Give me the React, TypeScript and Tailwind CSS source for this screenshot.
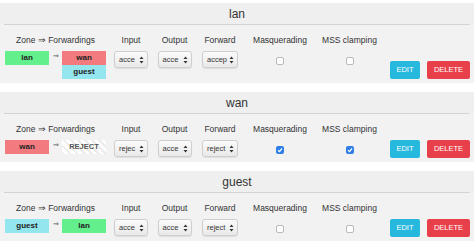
import React from "react";

const zoneColors: Record<string, string> = {
  lan: "bg-[#62ef8c]",
  wan: "bg-[#f37b80]",
  guest: "bg-[#93e6ed]",
};

interface PanelProps {
  title: string;
  forwards: string[] | null;
  input: string;
  output: string;
  forward: string;
  masq: boolean;
  mss: boolean;
  first?: boolean;
}

const Badge = ({ name }: { name: string }) => (
  <div
    className={`h-[14px] w-[44px] flex items-center justify-center text-[8px] font-bold text-[#222] ${zoneColors[name]}`}
  >
    {name}
  </div>
);

const Select = ({ value, width }: { value: string; width: string }) => (
  <div
    className={`${width} h-[17px] flex items-center rounded-[3px] border border-[#cfcfcf] bg-gradient-to-b from-[#fbfbfb] to-[#e9e9e9] pl-[4px] pr-[3px] shadow-[0_1px_1px_rgba(0,0,0,0.08)]`}
  >
    <span className="flex-1 whitespace-nowrap text-[7.5px] text-[#333]">{value}</span>
    <svg width="5" height="8" viewBox="0 0 5 8" className="ml-[2px] shrink-0">
      <path d="M0.5 3 L2.5 0.5 L4.5 3 Z" fill="#333" />
      <path d="M0.5 5 L2.5 7.5 L4.5 5 Z" fill="#333" />
    </svg>
  </div>
);

const Check = ({ on }: { on: boolean }) =>
  on ? (
    <div className="w-[8px] h-[8px] rounded-[2px] bg-[#2f7fe6] flex items-center justify-center">
      <svg width="6" height="6" viewBox="0 0 6 6">
        <path d="M1 3.2 L2.5 4.6 L5 1.5" stroke="#fff" strokeWidth="1.2" fill="none" />
      </svg>
    </div>
  ) : (
    <div className="w-[8px] h-[8px] rounded-[2px] border border-[#b9b9b9] bg-white" />
  );

const Panel = ({ title, forwards, input, output, forward, masq, mss, first }: PanelProps) => (
  <div className={`bg-[#f2f2f2] ${first ? "mt-[3px]" : "mt-[9px]"}`}>
    {/* Title */}
    <div className="h-[21px] flex items-center justify-center text-[12px] text-[#333] bg-[#efefef]">
      {title}
    </div>
    <div className="mx-[4px] h-px bg-[#d4d4d4]" />

    {/* Column heads */}
    <div className="flex pt-[9px] h-[22px] text-[8.5px] leading-[13px] text-[#333] text-center">
      <div className="ml-[5px] w-[101px]">Zone ⇒ Forwardings</div>
      <div className="ml-[4px] w-[42px]">Input</div>
      <div className="w-[45px]">Output</div>
      <div className="w-[46px]">Forward</div>
      <div className="w-[74px]">Masquerading</div>
      <div className="w-[65px]">MSS clamping</div>
    </div>

    {/* Row */}
    <div className="flex items-start mt-[4px] pb-[4px]">
      <div className="ml-[5px] w-[101px] flex items-start">
        <Badge name={title} />
        <span className="w-[13px] text-center text-[7px] leading-[10px] text-[#555]">⇒</span>
        {forwards ? (
          <div className="flex flex-col">
            {forwards.map((f) => (
              <Badge key={f} name={f} />
            ))}
          </div>
        ) : (
          <div className="h-[14px] w-[44px] flex items-center justify-center text-[7.5px] font-bold text-[#555] bg-[repeating-linear-gradient(45deg,#ebebeb_0px,#ebebeb_2px,#ffffff_2px,#ffffff_5px)]">
            REJECT
          </div>
        )}
      </div>
      <div className="ml-[4px] w-[42px] flex justify-center">
        <Select value={input} width="w-[34px]" />
      </div>
      <div className="w-[45px] flex justify-center">
        <Select value={output} width="w-[34px]" />
      </div>
      <div className="w-[46px] flex justify-center">
        <Select value={forward} width="w-[36px]" />
      </div>
      <div className="w-[74px] flex justify-center mt-[6px]">
        <Check on={masq} />
      </div>
      <div className="w-[65px] flex justify-center mt-[6px]">
        <Check on={mss} />
      </div>
      <div className="ml-[8px] flex gap-[7px] self-end">
        <div className="w-[30px] h-[18px] flex items-center justify-center rounded-[2px] bg-[#27b8de] text-[7.5px] text-white">
          EDIT
        </div>
        <div className="w-[43px] h-[18px] flex items-center justify-center rounded-[2px] bg-[#e8404b] text-[7.5px] text-white">
          DELETE
        </div>
      </div>
    </div>
  </div>
);

export default function App() {
  return (
    <div className="w-[474px] h-[244px] bg-white overflow-hidden font-['Liberation_Sans',Arial,sans-serif]">
      <Panel
        first
        title="lan"
        forwards={["wan", "guest"]}
        input="acce"
        output="acce"
        forward="accep"
        masq={false}
        mss={false}
      />
      <Panel
        title="wan"
        forwards={null}
        input="rejec"
        output="acce"
        forward="reject"
        masq={true}
        mss={true}
      />
      <Panel
        title="guest"
        forwards={["lan"]}
        input="acce"
        output="acce"
        forward="reject"
        masq={false}
        mss={false}
      />
    </div>
  );
}
